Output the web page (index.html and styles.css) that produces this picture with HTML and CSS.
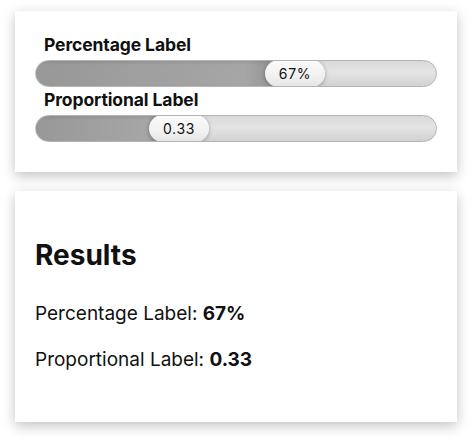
FILE: index.html
```html
<!DOCTYPE html>
<html>
<head>
<meta charset="utf-8">
<link rel="stylesheet" href="styles.css">
</head>
<body>
  <section class="card sliders">
    <div class="field">
      <div class="label">Percentage Label</div>
      <div class="track">
        <div class="fill" style="width: 246px"></div>
        <div class="thumb" style="left: 229px">67%</div>
      </div>
    </div>
    <div class="field">
      <div class="label">Proportional Label</div>
      <div class="track">
        <div class="fill" style="width: 130px"></div>
        <div class="thumb" style="left: 113px">0.33</div>
      </div>
    </div>
  </section>
  <section class="card results">
    <h2 class="title">Results</h2>
    <p class="line">Percentage Label: <b>67%</b></p>
    <p class="line">Proportional Label: <b>0.33</b></p>
  </section>
</body>
</html>
```
FILE: styles.css
```css
html, body {
  margin: 0;
  background: #ffffff;
}
body {
  padding: 11px 17px 18px 15px;
  font-family: Inter, "Liberation Sans", sans-serif;
  color: #111;
}
.card {
  background: #fff;
  box-shadow: 0 4px 12px rgba(0, 0, 0, 0.24);
}
.sliders {
  padding: 24px 20px 30px 20px;
  display: flex;
  flex-direction: column;
  gap: 3px;
}
.field {
  display: flex;
  flex-direction: column;
}
.label {
  font-size: 17.5px;
  font-weight: 700;
  line-height: 20px;
  padding-left: 9px;
  margin-bottom: 5px;
  letter-spacing: -0.1px;
}
.track {
  position: relative;
  height: 27px;
  border-radius: 14px;
  box-sizing: border-box;
  border: 1px solid #b4b4b4;
  background: linear-gradient(to bottom, #d9d9d9, #e4e4e4 45%, #d2d2d2);
  overflow: hidden;
}
.fill {
  height: 100%;
  background: linear-gradient(to right, #989898, #a6a6a6 85%, #8e8e8e);
  box-shadow: inset 0 2px 3px rgba(0,0,0,0.08);
}
.thumb {
  position: absolute;
  top: -1px;
  height: 27px;
  width: 60px;
  box-sizing: border-box;
  border-radius: 14px;
  background: linear-gradient(to bottom, #fbfbfb, #f1f1f1 60%, #e4e4e4);
  box-shadow: 0 1px 4px rgba(0,0,0,0.3);
  display: flex;
  align-items: center;
  justify-content: center;
  font-size: 14px;
  letter-spacing: 0.7px;
  color: #111;
}
.results {
  margin-top: 19px;
  padding: 47px 20px 51px 20px;
}
.title {
  margin: 0 0 31px 0;
  font-size: 28px;
  line-height: 34px;
  font-weight: 700;
}
.line {
  margin: 0;
  font-size: 19px;
  line-height: 22px;
}
.line + .line {
  margin-top: 24px;
}
.line b {
  font-weight: 700;
}
```
